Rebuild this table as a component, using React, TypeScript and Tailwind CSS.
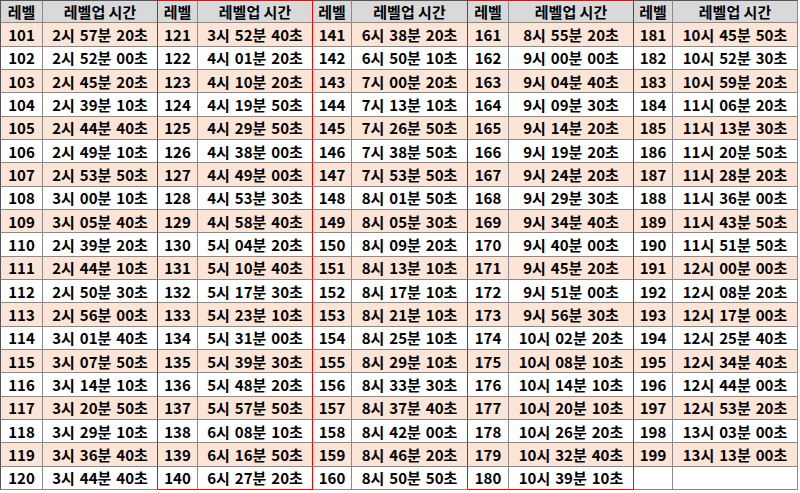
const groups: [number, string][][] = [
  [
    [101, '2시 57분 20초'], [102, '2시 52분 00초'], [103, '2시 45분 20초'], [104, '2시 39분 10초'],
    [105, '2시 44분 40초'], [106, '2시 49분 10초'], [107, '2시 53분 50초'], [108, '3시 00분 10초'],
    [109, '3시 05분 40초'], [110, '2시 39분 20초'], [111, '2시 44분 10초'], [112, '2시 50분 30초'],
    [113, '2시 56분 00초'], [114, '3시 01분 40초'], [115, '3시 07분 50초'], [116, '3시 14분 10초'],
    [117, '3시 20분 50초'], [118, '3시 29분 10초'], [119, '3시 36분 40초'], [120, '3시 44분 40초']
  ],
  [
    [121, '3시 52분 40초'], [122, '4시 01분 20초'], [123, '4시 10분 20초'], [124, '4시 19분 50초'],
    [125, '4시 29분 50초'], [126, '4시 38분 00초'], [127, '4시 49분 00초'], [128, '4시 53분 30초'],
    [129, '4시 58분 40초'], [130, '5시 04분 20초'], [131, '5시 10분 40초'], [132, '5시 17분 30초'],
    [133, '5시 23분 10초'], [134, '5시 31분 00초'], [135, '5시 39분 30초'], [136, '5시 48분 20초'],
    [137, '5시 57분 50초'], [138, '6시 08분 10초'], [139, '6시 16분 50초'], [140, '6시 27분 20초']
  ],
  [
    [141, '6시 38분 20초'], [142, '6시 50분 10초'], [143, '7시 00분 20초'], [144, '7시 13분 10초'],
    [145, '7시 26분 50초'], [146, '7시 38분 50초'], [147, '7시 53분 50초'], [148, '8시 01분 50초'],
    [149, '8시 05분 30초'], [150, '8시 09분 20초'], [151, '8시 13분 10초'], [152, '8시 17분 10초'],
    [153, '8시 21분 10초'], [154, '8시 25분 10초'], [155, '8시 29분 10초'], [156, '8시 33분 30초'],
    [157, '8시 37분 40초'], [158, '8시 42분 00초'], [159, '8시 46분 20초'], [160, '8시 50분 50초']
  ],
  [
    [161, '8시 55분 20초'], [162, '9시 00분 00초'], [163, '9시 04분 40초'], [164, '9시 09분 30초'],
    [165, '9시 14분 20초'], [166, '9시 19분 20초'], [167, '9시 24분 20초'], [168, '9시 29분 30초'],
    [169, '9시 34분 40초'], [170, '9시 40분 00초'], [171, '9시 45분 20초'], [172, '9시 51분 00초'],
    [173, '9시 56분 30초'], [174, '10시 02분 20초'], [175, '10시 08분 10초'], [176, '10시 14분 10초'],
    [177, '10시 20분 10초'], [178, '10시 26분 20초'], [179, '10시 32분 40초'], [180, '10시 39분 10초']
  ],
  [
    [181, '10시 45분 50초'], [182, '10시 52분 30초'], [183, '10시 59분 20초'], [184, '11시 06분 20초'],
    [185, '11시 13분 30초'], [186, '11시 20분 50초'], [187, '11시 28분 20초'], [188, '11시 36분 00초'],
    [189, '11시 43분 50초'], [190, '11시 51분 50초'], [191, '12시 00분 00초'], [192, '12시 08분 20초'],
    [193, '12시 17분 00초'], [194, '12시 25분 40초'], [195, '12시 34분 40초'], [196, '12시 44분 00초'],
    [197, '12시 53분 20초'], [198, '13시 03분 00초'], [199, '13시 13분 00초']
  ]
]

// columns whose right edge is the red box line (before and at the end of groups 2 and 4)
const redRight = [1, 3, 5, 7]
const redGroups = [1, 3]

function Cell({
  col,
  row,
  text,
  bg
}: {
  col: number
  row: number
  text: string
  bg: string
}) {
  const group = Math.floor(col / 2)
  const inRed = redGroups.includes(group)
  const right = redRight.includes(col) ? 'border-r-[#ff0000]' : 'border-r-[#8a8a8a]'
  const bottom = inRed && row === 20 ? 'border-b-[#ff0000]' : 'border-b-[#8a8a8a]'
  const top = row === 0 ? (inRed ? 'border-t border-t-[#ff0000]' : 'border-t border-t-[#555]') : ''
  const left = col === 0 ? 'border-l border-l-[#555]' : ''
  const isTime = row > 0 && col % 2 === 1
  return (
    <div
      className={`flex items-center justify-center border-r border-b ${right} ${bottom} ${top} ${left} ${bg} whitespace-nowrap ${isTime ? 'gap-[5px]' : ''}`}
    >
      {isTime ? text.split(' ').map((p, i) => <span key={i}>{p}</span>) : text}
    </div>
  )
}

export default function App() {
  const rows = Array.from({ length: 21 }, (_, r) => r)
  return (
    <div
      className="w-[800px] h-[493px] bg-white overflow-hidden text-[15px] font-bold text-black leading-none"
      style={{ fontFamily: '"Noto Sans CJK KR", "Noto Sans", sans-serif' }}
    >
      <div className="grid grid-cols-[43px_115px_40px_115px_39px_116px_41px_125px_39px_125px] auto-rows-[23.33px]">
        {rows.map((r) =>
          groups.flatMap((g, gi) => {
            const isHeader = r === 0
            const item = g[r - 1]
            const bg = isHeader ? 'bg-[#d9d9d9]' : r % 2 === 1 && item ? 'bg-[#fce4d6]' : 'bg-white'
            const a = isHeader ? '레벨' : item ? String(item[0]) : ''
            const b = isHeader ? '레벨업 시간' : item ? item[1] : ''
            return [
              <Cell key={`${r}-${gi}-a`} col={gi * 2} row={r} text={a} bg={bg} />,
              <Cell key={`${r}-${gi}-b`} col={gi * 2 + 1} row={r} text={b} bg={bg} />
            ]
          })
        )}
      </div>
    </div>
  )
}
